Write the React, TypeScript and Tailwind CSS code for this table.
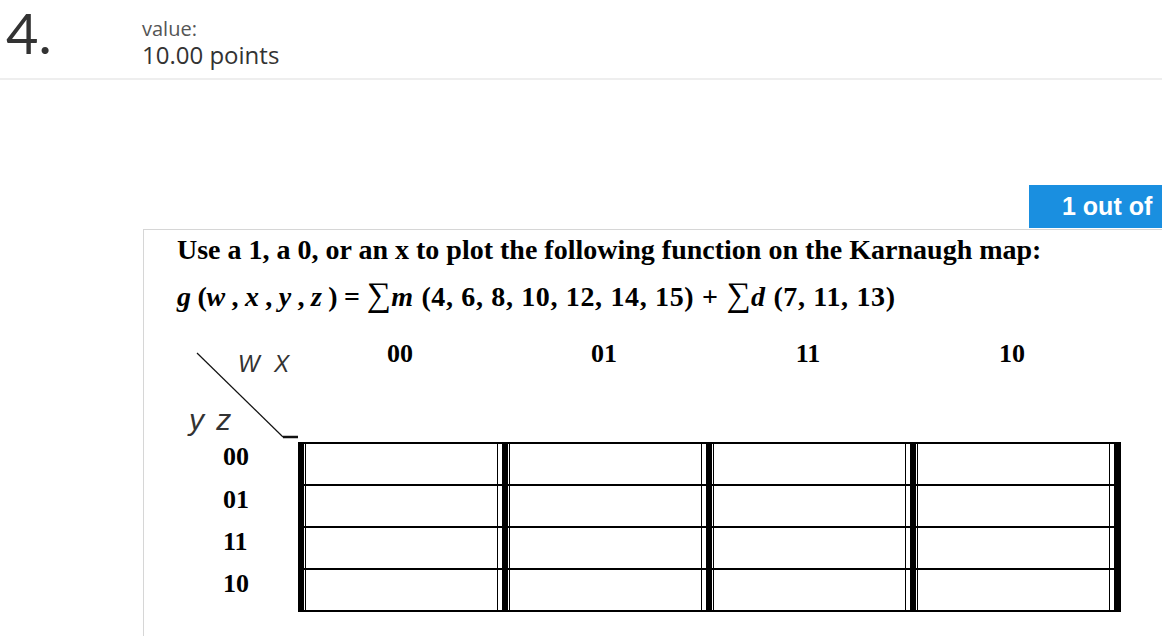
import React from "react";

const colLabels = ["00", "01", "11", "10"];
const rowLabels = ["00", "01", "11", "10"];

function Corner() {
  return (
    <div className="relative w-[154px] h-[116px] shrink-0">
      <svg className="absolute inset-0" width="154" height="116" viewBox="0 0 154 116">
        <line x1="53" y1="27" x2="139" y2="111" stroke="#111" strokeWidth="1.2" />
        <line x1="139" y1="111" x2="154" y2="111" stroke="#111" strokeWidth="2.5" />
      </svg>
      <span className="absolute left-[94px] top-[27px] text-[23px] italic text-[#333] tracking-[4px] leading-none font-['Liberation_Sans',Arial,sans-serif]">
        W X
      </span>
      <span className="absolute left-[45px] top-[79px] text-[30px] italic text-[#333] tracking-[2px] leading-none font-['Liberation_Sans',Arial,sans-serif]">
        y z
      </span>
    </div>
  );
}

function Cell({ first, last }: { first: boolean; last: boolean }) {
  return (
    <div
      className={`flex h-full border-l-[6px] border-b-2 border-black pl-[1px] pr-[4px] ${
        first ? "border-t-2" : ""
      } ${last ? "w-[211px] border-r-[7px]" : "w-[204px]"}`}
    >
      <div className="flex-1 border-x border-black bg-white" />
    </div>
  );
}

export default function App() {
  return (
    <div className="w-[1162px] h-[636px] overflow-hidden bg-white">
      {/* question header */}
      <div className="flex h-[80px] border-b-2 border-[#eee]">
        <div className="w-[142px] pl-[6px] text-[56px] leading-[66px] text-[#333] font-['Lato',sans-serif]">
          4.
        </div>
        <div className="pt-[17px] font-['Open_Sans',sans-serif]">
          <div className="text-[20px] leading-[24px] text-[#555]">value:</div>
          <div className="text-[24px] leading-[28px] text-[#333]">10.00 points</div>
        </div>
      </div>

      <div className="flex justify-end pt-[105px]">
        <div className="w-[133px] h-[43px] bg-[#1a8fe0] pl-[33px] pt-[6px] text-[25px] font-bold leading-[30px] text-white whitespace-nowrap font-['Liberation_Sans',Arial,sans-serif]">
          1 out of
        </div>
      </div>

      <div className="ml-[143px] mt-px border-l border-t border-[#d6d6d6] h-[420px] font-['Liberation_Serif','Times_New_Roman',serif] text-black">
        <div className="pl-[33px] pt-[2px] text-[28px] font-bold">
          <div className="leading-[36px] whitespace-nowrap">
            Use a 1, a 0, or an x to plot the following function on the Karnaugh map:
          </div>
          <div className="leading-[36px] mt-[10px] whitespace-nowrap">
            <span className="tracking-[-0.3px]">
              <i>g</i> (<i>w</i>&nbsp;, <i>x</i>&nbsp;, <i>y</i>&nbsp;, <i>z</i>&nbsp;) ={" "}
            </span>
            <span className="tracking-[0.65px]">
              <span className="font-normal text-[34px] leading-none">∑</span>
              <i>m</i> (4, 6, 8, 10, 12, 14, 15) +{" "}
              <span className="font-normal text-[34px] leading-none">∑</span>
              <i>d</i> (7, 11, 13)
            </span>
          </div>
        </div>

        {/* karnaugh map */}
        <div className="mt-[11px]">
          <div className="flex">
            <Corner />
            {colLabels.map((c, i) => (
              <div
                key={c}
                className={`${i === 3 ? "w-[211px] pr-[7px]" : "w-[204px]"} pt-[15px] text-center text-[26px] font-bold leading-none`}
              >
                {c}
              </div>
            ))}
          </div>
          {rowLabels.map((r, ri) => (
            <div key={r} className={`flex ${ri === 0 ? "h-[44px]" : "h-[42px]"}`}>
              <div className="w-[154px] pl-[79px] pb-[14px] flex items-center text-[26px] font-bold leading-none">
                {r}
              </div>
              {colLabels.map((c, ci) => (
                <Cell key={c} first={ri === 0} last={ci === 3} />
              ))}
            </div>
          ))}
        </div>
      </div>
    </div>
  );
}
